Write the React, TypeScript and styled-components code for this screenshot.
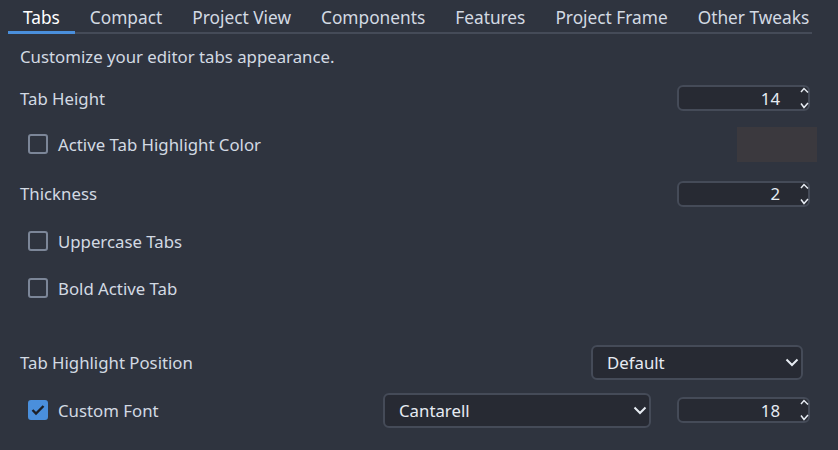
import React from 'react';
import styled, { createGlobalStyle } from 'styled-components';

const GlobalStyle = createGlobalStyle`
  html, body {
    margin: 0;
    padding: 0;
    background: #2f343f;
  }
  body {
    font-family: 'Noto Sans', 'Open Sans', sans-serif;
    color: #d3dae3;
  }
`;

const Page = styled.div`
  width: 838px;
  height: 450px;
  padding: 0 0 0 8px;
  box-sizing: border-box;
  overflow: hidden;
  background: #2f343f;
`;

const TabBar = styled.div`
  display: flex;
  width: 804px;
  height: 34px;
  border-bottom: 2px solid #454b58;
  box-sizing: border-box;
`;

const Tab = styled.div<{ $active?: boolean }>`
  display: flex;
  align-items: center;
  padding: 4px 15px 0;
  margin-bottom: -2px;
  font-size: 17.3px;
  color: ${(p) => (p.$active ? '#ffffff' : '#d3dae3')};
  border-bottom: 3px solid ${(p) => (p.$active ? '#4a8fdc' : 'transparent')};
  white-space: nowrap;
`;

const Content = styled.div`
  display: flex;
  flex-direction: column;
  padding: 0 0 0 12px;
`;

const Row = styled.div<{ $h: number; $indent?: boolean }>`
  display: flex;
  align-items: center;
  height: ${(p) => p.$h}px;
  padding-left: ${(p) => (p.$indent ? 8 : 0)}px;
  font-size: 16.8px;
`;

const Label = styled.span`
  flex: 1;
  white-space: nowrap;
`;

const Spacer = styled.div<{ $h: number }>`
  height: ${(p) => p.$h}px;
`;

const Box = styled.span<{ $checked?: boolean }>`
  width: 20px;
  height: 20px;
  box-sizing: border-box;
  border-radius: 3px;
  border: 2px solid ${(p) => (p.$checked ? '#4a8fdc' : '#7c8698')};
  background: ${(p) => (p.$checked ? '#4a8fdc' : 'transparent')};
  margin-right: 10px;
  display: flex;
  align-items: center;
  justify-content: center;
  flex: none;
`;

const SpinBox = styled.div`
  width: 133px;
  height: 26px;
  box-sizing: border-box;
  border: 2px solid #454b58;
  border-radius: 6px;
  background: #272a33;
  display: flex;
  align-items: center;
  justify-content: flex-end;
  margin-right: 28px;
  position: relative;
`;

const SpinValue = styled.span`
  font-size: 16.8px;
  color: #e6ebf2;
  margin-right: 28px;
`;

const Arrows = styled.div`
  position: absolute;
  right: -2px;
  top: 0;
  bottom: 0;
  display: flex;
  flex-direction: column;
  justify-content: space-between;
`;

const Select = styled.div<{ $w: number; $mr: number }>`
  width: ${(p) => p.$w}px;
  height: 35px;
  box-sizing: border-box;
  border: 2px solid #454b58;
  border-radius: 6px;
  background: #272a33;
  display: flex;
  align-items: center;
  justify-content: space-between;
  padding: 0 2px 0 14px;
  margin-right: ${(p) => p.$mr}px;
  font-size: 16.8px;
  color: #e6ebf2;
`;

const Swatch = styled.div`
  width: 80px;
  height: 35px;
  background: #3b393e;
  margin-right: 21px;
`;

const Check = () => (
  <svg width="14" height="12" viewBox="0 0 14 12">
    <path d="M1.5 6 L5 9.5 L12.5 2" fill="none" stroke="#1d2027" strokeWidth="2.4" />
  </svg>
);

const Chevron = () => (
  <svg width="14" height="10" viewBox="0 0 14 10">
    <path d="M1.5 2.5 L7 8 L12.5 2.5" fill="none" stroke="#e6ebf2" strokeWidth="2" />
  </svg>
);

const Spin = ({ value }: { value: string }) => (
  <SpinBox>
    <SpinValue>{value}</SpinValue>
    <Arrows>
      <svg width="10" height="8" viewBox="0 0 10 8">
        <path d="M1 5 L4 1.5 L8 5.5" fill="none" stroke="#e6ebf2" strokeWidth="1.5" />
      </svg>
      <svg width="10" height="8" viewBox="0 0 10 8">
        <path d="M1 2.5 L4 6.5 L8 2" fill="none" stroke="#e6ebf2" strokeWidth="1.5" />
      </svg>
    </Arrows>
  </SpinBox>
);

const tabs = ['Tabs', 'Compact', 'Project View', 'Components', 'Features', 'Project Frame', 'Other Tweaks'];

export default function App() {
  return (
    <Page>
      <GlobalStyle />
      <TabBar>
        {tabs.map((t, i) => (
          <Tab key={t} $active={i === 0}>
            {t}
          </Tab>
        ))}
      </TabBar>
      <Content>
        <Row $h={44}>
          <Label>Customize your editor tabs appearance.</Label>
        </Row>
        <Row $h={40}>
          <Label>Tab Height</Label>
          <Spin value="14" />
        </Row>
        <Row $h={52} $indent>
          <Box />
          <Label>Active Tab Highlight Color</Label>
          <Swatch />
        </Row>
        <Row $h={47}>
          <Label>Thickness</Label>
          <Spin value="2" />
        </Row>
        <Row $h={48} $indent>
          <Box />
          <Label>Uppercase Tabs</Label>
        </Row>
        <Row $h={46} $indent>
          <Box />
          <Label>Bold Active Tab</Label>
        </Row>
        <Spacer $h={29} />
        <Row $h={44}>
          <Label>Tab Highlight Position</Label>
          <Select $w={212} $mr={35}>
            <span>Default</span>
            <Chevron />
          </Select>
        </Row>
        <Row $h={52} $indent>
          <Box $checked>
            <Check />
          </Box>
          <Label>Custom Font</Label>
          <Select $w={268} $mr={26}>
            <span>Cantarell</span>
            <Chevron />
          </Select>
          <Spin value="18" />
        </Row>
      </Content>
    </Page>
  );
}
